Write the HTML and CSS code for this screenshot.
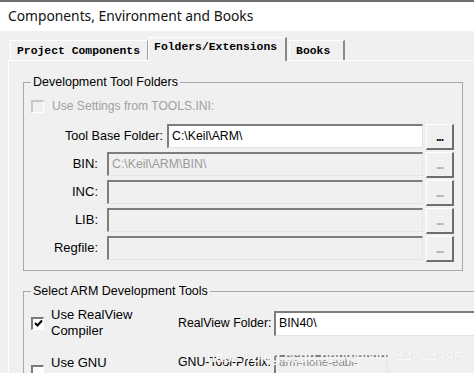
FILE: index.html
```html
<!DOCTYPE html>
<html lang="en">
<head>
    <meta charset="UTF-8">
    <meta name="viewport" content="width=device-width, initial-scale=1.0">
    <title>Components, Environment and Books</title>
    <link rel="stylesheet" href="styles.css">
</head>
<body>
    <div class="window">
        <div class="titlebar">Components, Environment and Books</div>
        <div class="dialog">
            <div class="tabs">
                <div class="tab">Project Components</div>
                <div class="tab active">Folders/Extensions</div>
                <div class="tab books">Books</div>
            </div>
            <div class="panel">
                <fieldset class="group folders">
                    <legend>Development Tool Folders</legend>
                    <div class="check disabled">
                        <span class="box"></span>
                        <span>Use Settings from TOOLS.INI:</span>
                    </div>
                    <div class="rows">
                        <div class="row base">
                            <span class="lbl">Tool Base Folder:</span>
                            <span class="field">C:\Keil\ARM\</span>
                            <span class="btn">...</span>
                        </div>
                        <div class="row">
                            <span class="lbl">BIN:</span>
                            <span class="field off">C:\Keil\ARM\BIN\</span>
                            <span class="btn off">...</span>
                        </div>
                        <div class="row">
                            <span class="lbl">INC:</span>
                            <span class="field off"></span>
                            <span class="btn off">...</span>
                        </div>
                        <div class="row">
                            <span class="lbl">LIB:</span>
                            <span class="field off"></span>
                            <span class="btn off">...</span>
                        </div>
                        <div class="row">
                            <span class="lbl">Regfile:</span>
                            <span class="field off"></span>
                            <span class="btn off">...</span>
                        </div>
                    </div>
                </fieldset>

                <fieldset class="group tools">
                    <legend>Select ARM Development Tools</legend>
                    <div class="tool-row first">
                        <div class="check">
                            <span class="box on">
                                <svg width="9" height="9" viewBox="0 0 9 9"><polyline points="1,4 3.5,6.5 8,1.5" fill="none" stroke="#000" stroke-width="2"/></svg>
                            </span>
                            <span>Use RealView<br>Compiler</span>
                        </div>
                        <span class="lbl">RealView Folder:</span>
                        <span class="field">BIN40\</span>
                    </div>
                    <div class="tool-row second">
                        <div class="check">
                            <span class="box"></span>
                            <span>Use GNU<br>Compiler</span>
                        </div>
                        <span class="lbl">GNU-Tool-Prefix:</span>
                        <span class="field off short">arm-none-eabi-</span>
                    </div>
                </fieldset>
            </div>
        </div>
        <div class="watermark">https://blog.csdn.net/weixin_44044395</div>
    </div>
</body>
</html>
```

FILE: styles.css
```css
* {
    box-sizing: border-box;
}
html, body {
    margin: 0;
    overflow: hidden;
    background: #f0f0f0;
}
.window {
    position: relative;
    width: 560px;
    height: 373px;
    overflow: hidden;
    font-family: "Liberation Sans", Arial, sans-serif;
    font-size: 12.3px;
    color: #000;
}
.titlebar {
    height: 31px;
    border-top: 2px solid #6e6e6e;
    background: #fff;
    padding-left: 8px;
    font-family: "Noto Sans", sans-serif;
    font-size: 13.8px;
    line-height: 27px;
    color: #111;
}
.dialog {
    background: #f0f0f0;
    padding: 6px 0 0 8px;
}

/* tabs */
.tabs {
    display: flex;
    align-items: flex-end;
    height: 23px;
    padding-left: 2px;
    position: relative;
    z-index: 1;
}
.tab {
    height: 20px;
    padding: 0 7px 0 6px;
    border-top: 1px solid #fff;
    border-left: 1px solid #fff;
    border-right: 1px solid #a0a0a0;
    font-family: "Liberation Mono", monospace;
    font-weight: bold;
    font-size: 11.4px;
    line-height: 20px;
    background: #f0f0f0;
}
.tab.active {
    height: 24px;
    margin: 0 -2px -1px 0;
    padding: 0 8px 0 5px;
    line-height: 19px;
    border-right: 2px solid #8a8a8a;
}
.tab.books {
    margin-left: 4px;
    padding-right: 13px;
    border-right: 2px solid #8a8a8a;
}
.panel {
    border-top: 1px solid #fff;
    border-left: 1px solid #fff;
    padding: 14px 0 0 14px;
}

/* group boxes */
.group {
    margin: 0;
    border: 1px solid #a8a8a8;
    padding: 0 8px 9px 7px;
}
.group legend {
    margin-left: 0;
    padding: 0 2px;
    font-size: 12.5px;
    line-height: 15px;
}
.folders {
    width: 440px;
}
.tools {
    margin-top: 13px;
    padding-top: 8px;
}

.check {
    display: flex;
    align-items: center;
    gap: 8px;
    line-height: 16px;
}
.check.disabled {
    color: #a0a0a0;
    margin-top: 8px;
    font-size: 12.1px;
}
.box {
    width: 13px;
    height: 13px;
    flex: none;
    display: flex;
    align-items: center;
    justify-content: center;
    border-style: solid;
    border-width: 2px 1px 1px 2px;
    border-color: #7a7a7a #fff #fff #7a7a7a;
    background: #fff;
}
.disabled .box {
    border-color: #c8c8c8 #fff #fff #c8c8c8;
    background: #f0f0f0;
}

.rows {
    display: flex;
    flex-direction: column;
    gap: 3px;
    margin-top: 10px;
}
.row {
    display: flex;
    align-items: flex-start;
    height: 25px;
}
.row .lbl {
    width: 67px;
    margin-right: 9px;
    text-align: right;
    line-height: 24px;
    font-size: 13px;
}
.row.base .lbl {
    width: 132px;
    margin-right: 4px;
    font-size: 12.6px;
}
.field {
    flex: 1;
    height: 24px;
    padding-left: 3px;
    line-height: 21px;
    border-style: solid;
    border-width: 2px 1px 1px 2px;
    border-color: #7d7d7d #e4e4e4 #e4e4e4 #7d7d7d;
    background: #fff;
    white-space: nowrap;
    overflow: hidden;
}
.field.off {
    background: #f0f0f0;
    color: #9a9a9a;
}
.btn {
    width: 28px;
    height: 26px;
    margin-left: 3px;
    border-style: solid;
    border-width: 1px 2px 2px 1px;
    border-color: #fff #6e6e6e #6e6e6e #fff;
    text-align: center;
    font-weight: bold;
    line-height: 24px;
    letter-spacing: -1px;
}
.btn.off {
    color: #a8a8a8;
}

.tool-row {
    display: flex;
    align-items: center;
}
.tool-row .check {
    flex: none;
    width: 147px;
    gap: 7px;
    font-size: 13px;
}
.tool-row .lbl {
    flex: none;
    width: 96px;
    white-space: nowrap;
}
.tool-row .field {
    height: 25px;
}
.tool-row.second {
    margin-top: 16px;
    align-items: flex-start;
}
.field.short {
    flex: none;
    width: 114px;
    line-height: 10px;
    font-size: 11.5px;
    color: #8a8a8a;
}

.watermark {
    position: absolute;
    right: 98px;
    top: 348px;
    font-size: 15px;
    line-height: 17px;
    color: #fbfbfb;
    text-shadow: 0 0 1px #cfcfcf;
    pointer-events: none;
}
```
